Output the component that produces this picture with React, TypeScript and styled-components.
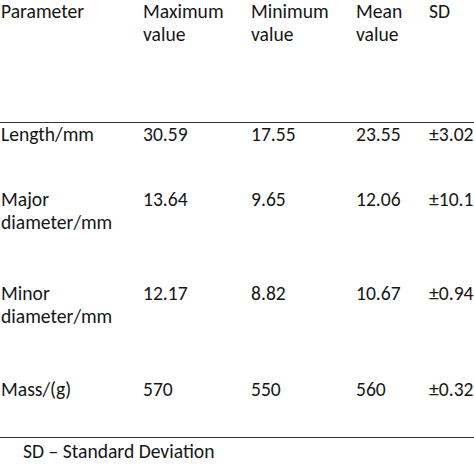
import React from 'react';
import styled, {createGlobalStyle} from 'styled-components';

const GlobalStyle = createGlobalStyle`
    html, body {
        margin: 0;
        padding: 0;
        background: #ffffff;
    }
`;

interface Row {
    label: string[];
    max: string;
    min: string;
    mean: string;
    sd: string;
    height: number;
}

const rows: Row[] = [
    {label: ['Length/mm'], max: '30.59', min: '17.55', mean: '23.55', sd: '±3.02', height: 65},
    {label: ['Major', 'diameter/mm'], max: '13.64', min: '9.65', mean: '12.06', sd: '±10.1', height: 94},
    {label: ['Minor', 'diameter/mm'], max: '12.17', min: '8.82', mean: '10.67', sd: '±0.94', height: 96},
    {label: ['Mass/(g)'], max: '570', min: '550', mean: '560', sd: '±0.32', height: 60},
];

const App = () => {
    return (
        <Page>
            <GlobalStyle/>
            <Table>
                <colgroup>
                    <col style={{width: 143}}/>
                    <col style={{width: 108}}/>
                    <col style={{width: 105}}/>
                    <col style={{width: 73}}/>
                    <col/>
                </colgroup>
                <thead>
                    <HeadRow>
                        <HeadCell>Parameter</HeadCell>
                        <HeadCell>Maximum<br/>value</HeadCell>
                        <HeadCell>Minimum<br/>value</HeadCell>
                        <HeadCell>Mean<br/>value</HeadCell>
                        <HeadCell>SD</HeadCell>
                    </HeadRow>
                </thead>
                <tbody>
                    {rows.map((row) => (
                        <BodyRow
                            key={row.label.join(' ')}
                            $height={row.height}
                        >
                            <Cell>
                                {row.label.map((line, i) => (
                                    <React.Fragment key={line}>
                                        {i > 0 && <br/>}
                                        {line}
                                    </React.Fragment>
                                ))}
                            </Cell>
                            <Cell>{row.max}</Cell>
                            <Cell>{row.min}</Cell>
                            <Cell>{row.mean}</Cell>
                            <Cell>{row.sd}</Cell>
                        </BodyRow>
                    ))}
                </tbody>
            </Table>
            <Footnote>SD – Standard Deviation</Footnote>
        </Page>
    );
};

const Page = styled.div`
    width: 474px;
    height: 464px;
    overflow: hidden;
    font-family: Carlito, Calibri, Lato, 'Liberation Sans', sans-serif;
    font-size: 19.6px;
    line-height: 23px;
    color: #161616;
`;

const Table = styled.table`
    width: 490px;
    border-collapse: collapse;
    table-layout: fixed;
`;

const HeadRow = styled.tr`
    height: 122.5px;
    border-bottom: 1.5px solid #333333;
`;

const HeadCell = styled.th`
    padding: 0;
    text-align: left;
    vertical-align: top;
    font-weight: normal;
    white-space: nowrap;

    &:first-child {
        padding-left: 1px;
    }
`;

const BodyRow = styled.tr<{$height: number}>`
    height: ${(p) => p.$height}px;

    &:last-child {
        border-bottom: 1.5px solid #333333;
    }
`;

const Cell = styled.td`
    padding: 0;
    vertical-align: top;
    white-space: nowrap;

    &:first-child {
        padding-left: 1px;
    }
`;

const Footnote = styled.div`
    padding: 2px 0 0 23px;
`;

export default App;
